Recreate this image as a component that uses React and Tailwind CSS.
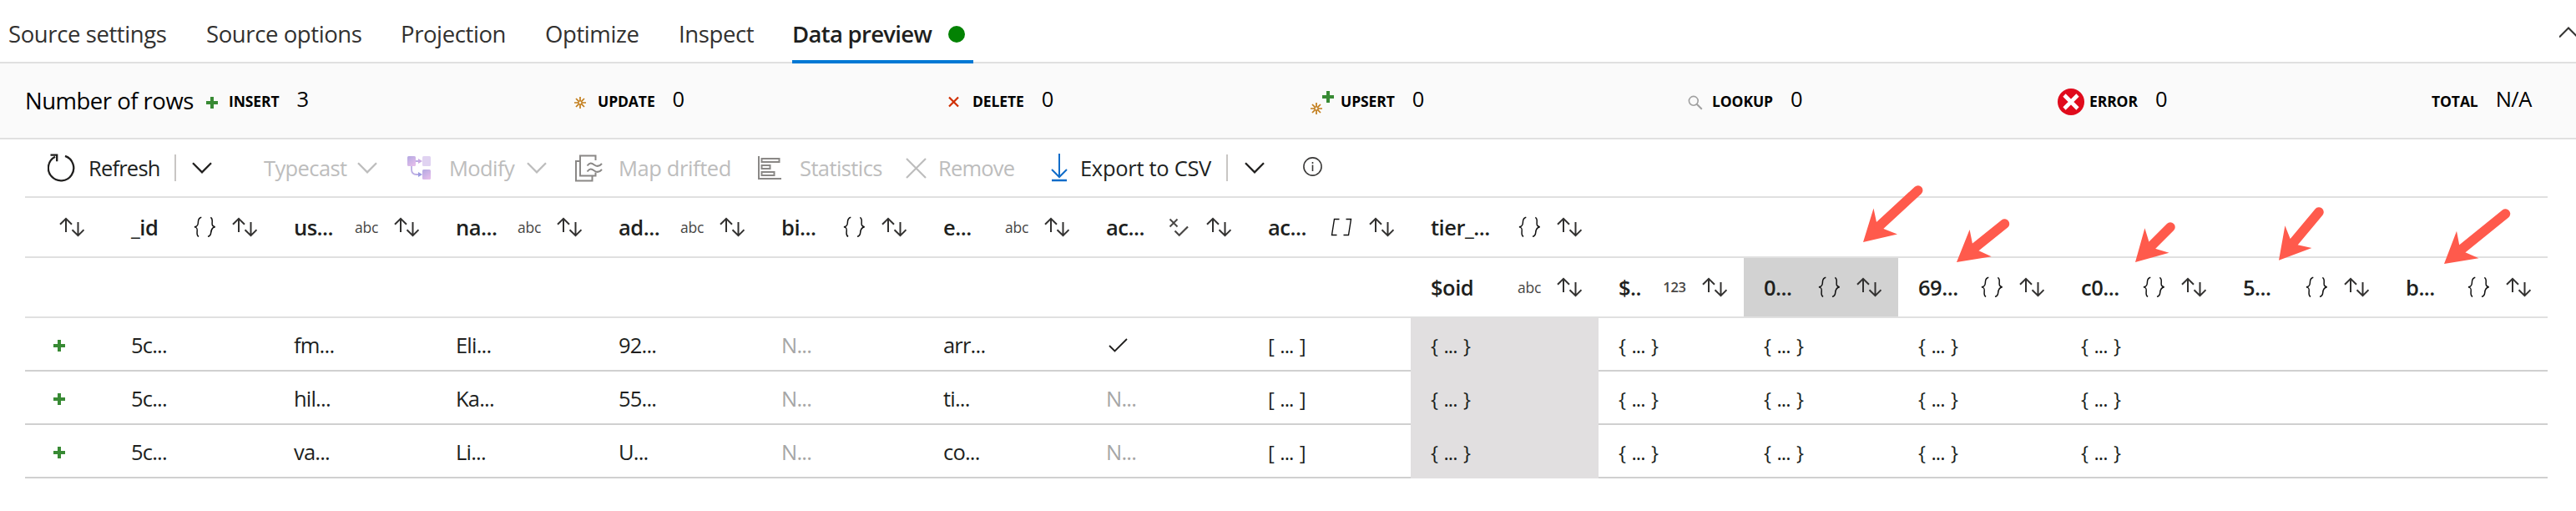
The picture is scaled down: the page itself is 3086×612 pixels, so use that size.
import React from 'react';

const tabs = [
  { label: 'Source settings', width: 'w-[237px]' },
  { label: 'Source options', width: 'w-[233px]' },
  { label: 'Projection', width: 'w-[173px]' },
  { label: 'Optimize', width: 'w-[160px]' },
  { label: 'Inspect', width: 'w-[136px]' },
];

const columns = [
  { name: '_id', type: 'object' },
  { name: 'us...', type: 'string' },
  { name: 'na...', type: 'string' },
  { name: 'ad...', type: 'string' },
  { name: 'bi...', type: 'object' },
  { name: 'e...', type: 'string' },
  { name: 'ac...', type: 'boolean' },
  { name: 'ac...', type: 'array' },
  { name: 'tier_...', type: 'object' },
];

const subColumns = [
  { name: '$oid', type: 'string' },
  { name: '$..', type: 'number' },
  { name: '0...', type: 'object', selected: true },
  { name: '69...', type: 'object' },
  { name: 'c0...', type: 'object' },
  { name: '5...', type: 'object' },
  { name: 'b...', type: 'object' },
];

const O = '{ ... }';
const A = '[ ... ]';

const rows = [
  ['5c...', 'fm...', 'Eli...', '92...', null, 'arr...', true, A, O, O, O, O, O, '', ''],
  ['5c...', 'hil...', 'Ka...', '55...', null, 'ti...', null, A, O, O, O, O, O, '', ''],
  ['5c...', 'va...', 'Li...', 'U...', null, 'co...', null, A, O, O, O, O, O, '', ''],
];

const gridCols =
  'grid grid-cols-[103px_195px_194px_195px_195px_194px_195px_194px_195px_225px_174px_185px_195px_194px_195px_194px]';

function PlusIcon() {
  return (
    <svg className="block h-[14px] w-[14px] shrink-0" viewBox="0 0 14 14">
      <path d="M5 0h4v5h5v4H9v5H5V9H0V5h5z" fill="#388a34" />
    </svg>
  );
}

function StarIcon() {
  return (
    <svg className="block h-[14px] w-[14px] shrink-0" viewBox="0 0 14 14" fill="none" stroke="#c27d1a" strokeWidth="1.7">
      <path d="M7 0v5M7 9v5M0 7h5M9 7h5M2 2l3.6 3.6M8.4 8.4L12 12M12 2L8.4 5.6M5.6 8.4L2 12" />
      <circle cx="7" cy="7" r="2" strokeWidth="1.2" />
    </svg>
  );
}

function DeleteIcon() {
  return (
    <svg className="block h-[14px] w-[14px] shrink-0" viewBox="0 0 14 14" fill="none" stroke="#d02e00" strokeWidth="2.2">
      <path d="M1 1.5l11 11M12 1.5l-11 11" />
    </svg>
  );
}

function UpsertIcon() {
  return (
    <div className="flex h-[28px] w-[28px] shrink-0">
      <div className="self-end">
        <StarIcon />
      </div>
      <PlusIcon />
    </div>
  );
}

function LookupIcon() {
  return (
    <svg className="block h-[18px] w-[18px] shrink-0" viewBox="0 0 18 18" fill="none" stroke="#a0a0a0" strokeWidth="1.6">
      <circle cx="6.8" cy="6.8" r="5.4" />
      <path d="M10.5 10.5l6.3 6.3" strokeWidth="2" />
    </svg>
  );
}

function ErrorIcon() {
  return (
    <svg className="block h-[32px] w-[32px] shrink-0" viewBox="0 0 32 32">
      <circle cx="16" cy="16" r="16" fill="#e00b1c" />
      <path d="M8 8l16 16M24 8L8 24" stroke="#fff" strokeWidth="4.6" />
    </svg>
  );
}

function SortIcon() {
  return (
    <svg className="block h-[24px] w-[30px] shrink-0" viewBox="0 0 30 24" fill="none" stroke="#323130" strokeWidth="2">
      <path d="M8 1.5V18M1 8.8l7-7 7 7" />
      <path d="M22.5 6v16.5M15.5 15.2l7 7 7-7" />
    </svg>
  );
}

function Chevron({ color }) {
  return (
    <svg className="block h-[14px] w-[24px] shrink-0" viewBox="0 0 24 14" fill="none" stroke={color} strokeWidth="2.3">
      <path d="M1 1.3l11 11 11-11" />
    </svg>
  );
}

function TypeIcon({ type }) {
  if (type === 'string') {
    return <span className="text-[17.5px] tracking-[-0.2px] text-[#484644]">abc</span>;
  }
  if (type === 'number') {
    return <span className="text-[16.5px] font-semibold tracking-[-0.3px] text-[#484644]">123</span>;
  }
  if (type === 'boolean') {
    return (
      <svg className="h-[24px] w-[24px]" viewBox="0 0 24 24" fill="none" stroke="#484644" strokeWidth="2.2">
        <path d="M1.5 2.5l9 9M10.5 2.5l-9 9" strokeWidth="1.9" />
        <path d="M7.5 16.500l5.200 5.200L23 11.500" />
      </svg>
    );
  }
  if (type === 'array') {
    return (
      <svg className="h-[24px] w-[28px]" viewBox="0 0 28 24" fill="none" stroke="#111" strokeWidth="1.4">
        <path d="M11.5 2.5H5.500L2.500 21.500h6M19.500 2.500h6L22.500 21.500h-6" />
      </svg>
    );
  }
  return (
    <svg className="h-[26px] w-[28px]" viewBox="0 0 28 26" fill="none" stroke="#111" strokeWidth="1.5">
      <path d="M10.3 1.300C7.600 2 6.700 3.600 6.500 6c-.2 2.800.2 6-4.500 6.800 4 .8 3.300 3.400 3.100 6-.2 2.500 0 4.600 2 5.600" />
      <path d="M21.3 1.300c2 1 2.100 3.100 1.900 5.600-.2 2.600-.5 5.100 3.500 5.900-4.500.8-4.800 4-5 6.800-.2 2.400-1.200 4.100-3.700 4.800" />
    </svg>
  );
}

function HeaderCell({ column }) {
  return (
    <div className={`flex h-[70px] items-center pl-[24px] pr-[20px] ${column.selected ? 'bg-[#d2d2d2]' : ''}`}>
      <span className="flex-1 text-[25.5px] font-semibold tracking-[-0.5px] text-[#201f1e]">{column.name}</span>
      <span className="mr-[17px] flex w-[32px] shrink-0 justify-center">
        <TypeIcon type={column.type} />
      </span>
      <SortIcon />
    </div>
  );
}

function Cell({ value, selected }) {
  let content = <span className="text-[#201f1e]">{value}</span>;
  if (value === null) content = <span className="text-[#a6a6a6]">N...</span>;
  if (value === O || value === A) {
    content = (
      <span className="mt-[2px] text-[24px] tracking-[-0.9px] text-[#201f1e] [word-spacing:2px]">{value}</span>
    );
  }
  if (value === true) {
    content = (
      <svg className="ml-[3px] h-[17px] w-[23px]" viewBox="0 0 23 17" fill="none" stroke="#201f1e" strokeWidth="1.8">
        <path d="M1 9l6.500 6.500L22 1" />
      </svg>
    );
  }

  return (
    <div
      className={`flex h-[64px] items-center border-b-2 pl-[24px] pt-[2px] text-[25.5px] tracking-[-0.8px] ${
        selected ? 'border-[#e1dfe0] bg-[#e1dfe0]' : 'border-[#d0d0d0]'
      }`}
    >
      {content}
    </div>
  );
}

function Stat({ icon, label, value, width }) {
  return (
    <div className={`flex h-full shrink-0 items-center ${width}`}>
      {icon}
      <span className="mt-[1px] text-[17.5px] font-bold tracking-[-0.1px]">{label}</span>
      <span className="mb-1 ml-[21px] text-[25.5px] tracking-[-0.5px]">{value}</span>
    </div>
  );
}

function StatsBar() {
  return (
    <div className="flex h-[91px] items-center overflow-hidden border-b-2 border-[#e0e0e0] bg-[#fafafa] pl-[30px] text-black">
      <span className="w-[217px] shrink-0 text-[27.5px] tracking-[-0.5px]">Number of rows</span>
      <Stat width="w-[441px]" icon={<div className="mt-1 w-[27px]"><PlusIcon /></div>} label="INSERT" value="3" />
      <Stat width="w-[448px]" icon={<div className="mt-1 w-[28px]"><StarIcon /></div>} label="UPDATE" value="0" />
      <Stat width="w-[434px]" icon={<div className="mt-[2px] w-[29px]"><DeleteIcon /></div>} label="DELETE" value="0" />
      <Stat width="w-[452px]" icon={<div className="mt-[4px] w-[36px]"><UpsertIcon /></div>} label="UPSERT" value="0" />
      <Stat width="w-[443px]" icon={<div className="mt-1 w-[29px]"><LookupIcon /></div>} label="LOOKUP" value="0" />
      <Stat width="w-[448px]" icon={<div className="mt-[3px] w-[38px]"><ErrorIcon /></div>} label="ERROR" value="0" />
      <Stat width="w-[150px]" label="TOTAL" value="N/A" />
    </div>
  );
}

function Toolbar() {
  return (
    <div className="ml-[30px] mr-[34px] flex h-[70px] items-center border-b-2 border-[#e0e0e0] pl-[27px] text-[25.5px] text-[#201f1e]">
      <svg className="h-[34px] w-[34px] shrink-0" viewBox="0 0 34 34" fill="none" stroke="#201f1e" strokeWidth="2.3">
        <path d="M21 2.800A15.200 15.200 0 1 1 9 3.700M3.500 1.600h7.700v7.700" />
      </svg>
      <span className="ml-[15px] w-[103px] tracking-[-0.8px]">Refresh</span>
      <div className="h-[32px] w-[2px] bg-[#c8c6c4]" />
      <div className="ml-[19px] w-[86px]">
        <Chevron color="#201f1e" />
      </div>
      <span className="w-[112px] tracking-[-0.6px] text-[#bdbdbd]">Typecast</span>
      <Chevron color="#bdbdbd" />
      <svg className="ml-[36px] h-[28px] w-[28px] shrink-0" viewBox="0 0 28 28">
        <defs>
          <linearGradient id="block" x1="0" y1="0" x2="0.6" y2="1">
            <stop offset="0" stopColor="#b3a8e2" />
            <stop offset="1" stopColor="#e2bdea" />
          </linearGradient>
        </defs>
        <rect x="0" y="0" width="10" height="12" rx="1.5" fill="url(#block)" />
        <rect x="18" y="0" width="10" height="12" rx="1.5" fill="#e0d3f1" />
        <rect x="18" y="16" width="10" height="12" rx="1.5" fill="url(#block)" />
        <path d="M10 6h4M5 12v4q0 6 6 6h3" fill="none" stroke="#bcaee4" strokeWidth="1.8" />
        <path d="M13 3l5 3-5 3z" fill="#c9a9e4" />
        <path d="M13 19l5 3-5 3z" fill="#9b9be0" />
      </svg>
      <span className="ml-[22px] w-[93px] tracking-[-0.6px] text-[#bdbdbd]">Modify</span>
      <Chevron color="#bdbdbd" />
      <svg className="ml-[34px] h-[33px] w-[33px] shrink-0" viewBox="0 0 33 33" fill="none" stroke="#8a8886" strokeWidth="2">
        <path d="M24.5 7V1.500H6V25.500h18.500v-4M6 8H1v23.500h19.500v-5" />
        <path d="M14.5 13.500c3-4 5-3.500 8.500-1s6 2 9-1.500M14.500 20.500c3-4 5-3.500 8.500-1s6 2 9-1.500" />
      </svg>
      <span className="ml-[19px] w-[167px] tracking-[-0.4px] text-[#bdbdbd]">Map drifted</span>
      <svg className="h-[28px] w-[28px] shrink-0" viewBox="0 0 28 28" fill="none" stroke="#8a8886" strokeWidth="2">
        <path d="M1 0v27h27M4.500 3h21v4h-21zM4.500 11h10v4h-10zM4.500 19h15v4h-15z" />
      </svg>
      <span className="ml-[22px] w-[127px] tracking-[-0.6px] text-[#bdbdbd]">Statistics</span>
      <svg className="h-[25px] w-[25px] shrink-0" viewBox="0 0 25 25" fill="none" stroke="#bdbdbd" strokeWidth="2.2">
        <path d="M1 1l23 23M24 1L1 24" />
      </svg>
      <span className="ml-[14px] w-[135px] tracking-[-0.8px] text-[#bdbdbd]">Remove</span>
      <svg className="h-[34px] w-[20px] shrink-0" viewBox="0 0 20 34" fill="none" stroke="#0f6cc9" strokeWidth="2">
        <path d="M10 0v27M1 19l9 9 9-9" />
        <path d="M1 32h18" strokeWidth="2.5" />
      </svg>
      <span className="ml-[15px] w-[175px] tracking-[-0.3px]">Export to CSV</span>
      <div className="h-[32px] w-[2px] bg-[#c8c6c4]" />
      <div className="ml-[20px] w-[70px]">
        <Chevron color="#201f1e" />
      </div>
      <svg className="mb-[3px] h-[23px] w-[23px] shrink-0" viewBox="0 0 23 23" fill="none" stroke="#3b3a39" strokeWidth="1.6">
        <circle cx="11.5" cy="11.5" r="10.6" />
        <path d="M11.500 9.500v7.500M11.500 6v2" />
      </svg>
    </div>
  );
}

// head is a polygon, the shaft runs from the head's notch to a rounded tail
const arrows = [
  { head: '2232,290 2244.5,249.5 2248,266 2256.5,274 2273,280.5', shaft: 'M2251 271L2297.7 228' },
  { head: '2344,314 2359.6,275 2363,292 2370,300 2385.7,307.3', shaft: 'M2366 296.5L2401.5 268' },
  { head: '2558,314 2569.4,273.3 2574.6,290 2581.8,297.7 2598.5,302.7', shaft: 'M2577.5 294.5L2600 272' },
  { head: '2730,311.7 2737.4,270.3 2743.8,286.3 2752.6,293.3 2769.4,297', shaft: 'M2747.5 290.5L2778 254' },
  { head: '2928,316 2943,276.7 2946.2,293.3 2953.4,302.3 2969.4,309.3', shaft: 'M2949 298.5L3001.5 256' },
];

function Annotations() {
  return (
    <svg className="pointer-events-none absolute left-0 top-0" width="3086" height="612" viewBox="0 0 3086 612">
      {arrows.map((arrow) => (
        <g key={arrow.head}>
          <polygon points={arrow.head} fill="#ff5a4c" />
          <path d={arrow.shaft} stroke="#ff5a4c" strokeWidth="11.5" strokeLinecap="round" />
        </g>
      ))}
    </svg>
  );
}

function App() {
  return (
    <div className="relative h-[612px] w-[3086px] overflow-hidden whitespace-nowrap bg-white font-['Open_Sans','Noto_Sans',sans-serif]">
      <div className="flex h-[76px] border-b-2 border-[#e0e0e0] pl-[10px] text-[27.5px] text-[#323130]">
        {tabs.map((tab) => (
          <div key={tab.label} className={`flex shrink-0 items-center pt-[7px] tracking-[-0.4px] ${tab.width}`}>
            {tab.label}
          </div>
        ))}
        <div className="flex h-[76px] w-[217px] shrink-0 items-center border-b-4 border-[#0078d4] pt-[9px]">
          <span className="w-[187px] font-semibold tracking-[-0.7px] text-[#201f1e]">Data preview</span>
          <span className="h-[20px] w-[20px] rounded-full bg-[#038203]" />
        </div>
        <svg className="ml-auto mt-[32px] h-[14px] w-[20px]" viewBox="0 0 20 14" fill="none" stroke="#323130" strokeWidth="2">
          <path d="M0 12.5L11 1.500l11 11" />
        </svg>
      </div>

      <StatsBar />
      <Toolbar />

      <div className="ml-[30px] w-[3022px]">
        <div className={`border-b-2 border-[#e0e0e0] ${gridCols}`}>
          <div className="flex h-[70px] items-center pl-[41px]">
            <SortIcon />
          </div>
          {columns.map((column, i) => (
            <HeaderCell key={i} column={column} />
          ))}
        </div>
        <div className={`border-b-2 border-[#e0e0e0] ${gridCols}`}>
          <div className="col-span-9" />
          {subColumns.map((column) => (
            <HeaderCell key={column.name} column={column} />
          ))}
        </div>
        {rows.map((row, i) => (
          <div key={i} className={gridCols}>
            <div className="flex h-[64px] items-center border-b-2 border-[#d0d0d0] pl-[34px] pt-[4px]">
              <PlusIcon />
            </div>
            {row.map((value, j) => (
              <Cell key={j} value={value} selected={j === 8} />
            ))}
          </div>
        ))}
      </div>

      <Annotations />
    </div>
  );
}

export default App;
